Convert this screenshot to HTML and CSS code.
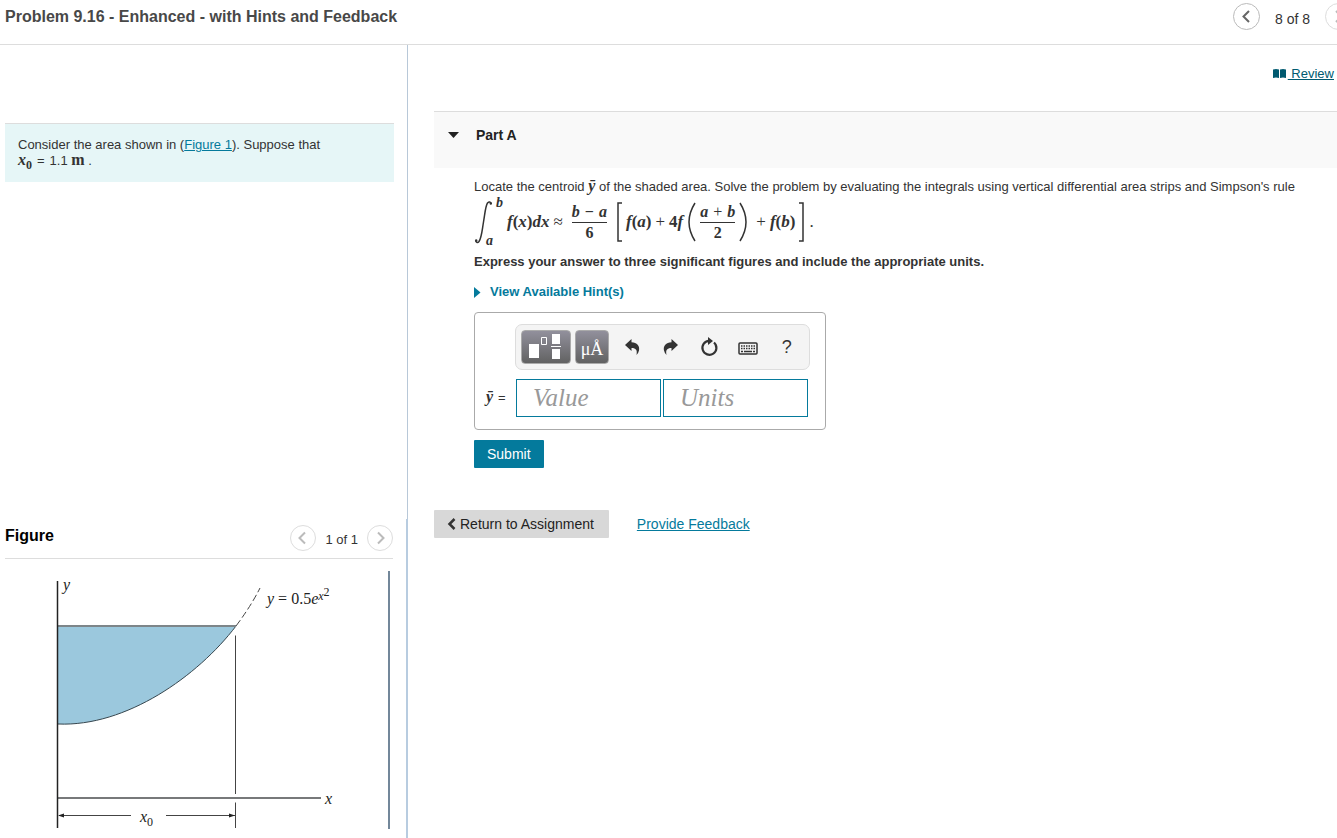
FILE: index.html
```html
<!DOCTYPE html>
<html lang="en">
<head>
<meta charset="utf-8">
<title>Problem 9.16 - Enhanced - with Hints and Feedback</title>
<link rel="stylesheet" href="styles.css">
</head>
<body>
<header class="topbar">
  <h1 class="topbar-title">Problem 9.16 - Enhanced - with Hints and Feedback</h1>
  <nav class="pager" aria-label="Problems">
    <button class="round" type="button" aria-label="Previous problem"><svg width="25" height="25" viewBox="0 0 25 25"><path d="M15 7 9.500 12.500 15 18"/></svg></button>
    <span>8 of 8</span>
    <button class="round round-off" type="button" aria-label="Next problem"><svg width="25" height="25" viewBox="0 0 25 25"><path d="M10 7l5.500 5.500L10 18"/></svg></button>
  </nav>
</header>
<main class="panes">
  <aside class="left">
    <section class="intro">
      <div class="given">Consider the area shown in (<a href="#figure">Figure 1</a>). Suppose that<br><span class="math"><i>x</i><sub>0</sub></span><span class="equals">=</span>1.1 <span class="math">m</span> .</div>
    </section>
    <section class="figure" id="figure">
      <div class="figure-head">
        <h2>Figure</h2>
        <nav class="figure-pager" aria-label="Figures">
          <button class="round round-off" type="button" aria-label="Previous figure"><svg width="24" height="24" viewBox="0 0 24 24"><path d="M14 6.500 8.500 12 14 17.500"/></svg></button>
          <span>1 of 1</span>
          <button class="round round-off" type="button" aria-label="Next figure"><svg width="24" height="24" viewBox="0 0 24 24"><path d="M10 6.500l5.500 5.500L10 17.500"/></svg></button>
        </nav>
      </div>
      <svg class="plot" viewBox="5 559 388 272" role="img" aria-label="Shaded area between the curve and a horizontal line, for x from 0 to x0">
        <path d="M58 626H236C198 676 126 727 58 724Z" fill="#9bc8dd"/>
        <path d="M236 626C198 676 126 727 58 724" fill="none" stroke="#37474f"/>
        <path d="M58 626H236" stroke="#7d8589" stroke-width="2"/>
        <path d="M58 798H321" stroke="#77797a" stroke-width="2"/>
        <path d="M57.500 581V828" stroke="#222" stroke-width="1.500"/>
        <path d="M235.500 635.500V794M235.500 802.500V828" stroke="#444"/>
        <path d="M236 626Q251 606 260 588" stroke="#444" fill="none" stroke-dasharray="7 3"/>
        <path d="M59 815.500H131M166 815.500H235" stroke="#444"/>
        <path d="M58 815.500l6-2v4zM235 815.500l-6-2v4z" fill="#222"/>
        <path d="M389 571V829" stroke="#73879a" stroke-width="2"/>
        <g class="plot-text">
          <text x="63" y="590"><tspan class="it">y</tspan></text>
          <text x="267" y="604"><tspan class="it">y</tspan> = 0.5<tspan class="it">e</tspan><tspan class="it small" dy="-4">x</tspan><tspan class="small" dy="-4">2</tspan></text>
          <text x="325" y="804"><tspan class="it">x</tspan></text>
          <text x="140" y="822"><tspan class="it">x</tspan><tspan class="small" dy="4">0</tspan></text>
        </g>
      </svg>
    </section>
  </aside>
  <section class="right">
    <div class="review"><svg width="13" height="9" viewBox="0 0 13 9"><path d="M0 .5Q3-.3 6 .5V9Q3 8.200 0 9ZM7 .5Q10-.3 13 .5V9Q10 8.200 7 9Z" fill="#005a70"/></svg><a href="#review">&nbsp;Review</a></div>
    <button class="part" type="button" aria-expanded="true"><svg width="12" height="6" viewBox="0 0 12 6"><path d="M0 0H11L5.500 6Z" fill="#222"/></svg>Part A</button>
    <div class="body">
      <p class="prompt">Locate the centroid <i class="math">ȳ</i> of the shaded area. Solve the problem by evaluating the integrals using vertical differential area strips and Simpson's rule</p>
      <div class="formula math">
        <svg width="18" height="44" viewBox="0 0 18 44"><path d="M17.500 4Q16 .5 13.500 3C11.500 6 11 13 9.500 22S7.500 38 5 41.500Q3 44 1.500 40.500" fill="none" stroke="#333" stroke-width="1.500"/><circle cx="16.800" cy="3.500" r="1.200"/><circle cx="2.200" cy="40.500" r="1.200"/></svg>
        <span class="limits"><i>b</i><i class="lower">a</i></span>
        <span><i>f</i>(<i>x</i>)<i>dx</i><span class="op light">≈</span></span>
        <span class="frac ratio"><span><i>b</i><span class="op">−</span><i>a</i></span><span>6</span></span>
        <svg width="6" height="40" viewBox="0 0 6 40"><path d="M6 1H2V39H6" fill="none" stroke="#333" stroke-width="1.500"/></svg>
        <span><i>f</i>(<i>a</i>)<span class="op light">+</span>4<i>f</i></span>
        <svg width="9" height="40" viewBox="0 0 9 40"><path d="M8 1Q-4 20 8 39" fill="none" stroke="#333" stroke-width="1.500"/></svg>
        <span class="frac"><span><i>a</i><span class="op light">+</span><i>b</i></span><span>2</span></span>
        <svg width="9" height="40" viewBox="0 0 9 40"><path d="M1 1Q13 20 1 39" fill="none" stroke="#333" stroke-width="1.500"/></svg>
        <span><span class="op light">+</span><i>f</i>(<i>b</i>)</span>
        <svg width="6" height="40" viewBox="0 0 6 40"><path d="M0 1H4V39H0" fill="none" stroke="#333" stroke-width="1.500"/></svg>
        <span class="stop">.</span>
      </div>
      <p class="express">Express your answer to three significant figures and include the appropriate units.</p>
      <button class="hints" type="button"><svg width="7" height="11" viewBox="0 0 7 11"><path d="M0 0 6.500 5.500 0 11Z" fill="#047a9c"/></svg>View Available Hint(s)</button>
      <form class="answer">
        <div class="tools">
          <button class="tool dark templates" type="button" aria-label="Templates"><svg width="34" height="28" viewBox="0 0 34 28"><path d="M0 13H10V27H0ZM23 3H31V13H23ZM23 18H31V28H23Z" fill="#fff"/><path d="M12.500 6.500H17.500V13.500H12.500ZM22 15.500H32" fill="none" stroke="#fff"/></svg></button>
          <button class="tool dark symbols" type="button" aria-label="Symbols">μÅ</button>
          <button class="tool" type="button" aria-label="Undo"><svg width="15" height="16" viewBox="0 0 15 16"><path d="M0 6 6.500 0V3.200C12 3.200 15 7 14 11.500Q13.500 14 11.500 16C12.500 11 11 9 6.500 9V12Z"/></svg></button>
          <button class="tool" type="button" aria-label="Redo"><svg width="15" height="16" viewBox="0 0 15 16"><path d="M15 6 8.500 0V3.200C3 3.200 0 7 1 11.500Q1.500 14 3.500 16C2.500 11 4 9 8.500 9V12Z"/></svg></button>
          <button class="tool" type="button" aria-label="Reset"><svg width="18" height="20" viewBox="0 0 18 20"><path d="M14 5.500A7 7 0 1 1 9 3.800" fill="none" stroke="#333" stroke-width="2.200"/><path d="M8 0 13 4 8 8Z"/></svg></button>
          <button class="tool" type="button" aria-label="Keyboard shortcuts"><svg class="keys" width="20" height="13" viewBox="0 0 20 13"><rect x="1" y="1" width="18" height="11" rx="1" fill="none" stroke="#333" stroke-width="1.500"/><path d="M3 4H17M3 6.500H17" stroke="#333" stroke-width="1.500" stroke-dasharray="1.500 1"/><path d="M3 9.500H5M6 9.500H14M15 9.500H17" stroke="#333" stroke-width="1.500"/></svg></button>
          <button class="tool help" type="button" aria-label="Help">?</button>
        </div>
        <div class="entry">
          <label for="value"><i class="math">ȳ</i><span class="equals">=</span></label>
          <input id="value" type="text" placeholder="Value">
          <input id="units" type="text" placeholder="Units" aria-label="Units">
        </div>
      </form>
      <button class="submit" type="button">Submit</button>
    </div>
    <div class="links">
      <button class="return" type="button"><svg width="9" height="12" viewBox="0 0 9 12"><path d="M7.500 1 2.500 6l5 5" fill="none" stroke="#333" stroke-width="2.500"/></svg>Return to Assignment</button>
      <a href="#feedback">Provide Feedback</a>
    </div>
  </section>
</main>
</body>
</html>
```
FILE: styles.css
```css
* { box-sizing: border-box; }
body {
  margin: 0;
  min-height: 100vh;
  display: flex;
  flex-direction: column;
  overflow: hidden;
  background: #fff;
  color: #333;
  font: 13px/16px "Liberation Sans", Arial, sans-serif;
}
h1, h2, p { margin: 0; }
button { font: inherit; color: inherit; border: 0; background: none; padding: 0; cursor: pointer; }
a { color: #047a9c; text-decoration: underline; }
svg { display: block; flex: none; }
.math { font-family: "Liberation Serif", "Times New Roman", serif; font-weight: bold; }
.math sub { font-size: 12px; line-height: 0; }
.equals { margin: 0 5px; }
.formula .op { margin: 0 4px; }
.light { font-weight: normal; }

.topbar {
  height: 45px;
  display: flex;
  justify-content: space-between;
  align-items: flex-start;
  padding: 3px 0 0 5px;
  border-bottom: 1px solid #ddd;
}
.topbar-title { font-size: 16px; line-height: 28px; color: #484848; }
.pager, .figure-pager { display: flex; align-items: center; gap: 15px; font-size: 14px; }
.pager { margin-right: -15px; }
.pager span { padding-top: 4px; }
.round { border: 1px solid #bbb; border-radius: 50%; }
.round svg { fill: none; stroke: #666; stroke-width: 2; }
.round-off { border-color: #ddd; }
.round-off svg { stroke: #bbb; }

.panes { flex: 1; display: grid; grid-template-columns: 408px minmax(0, 1fr); }
.left { display: grid; grid-template-rows: 1fr auto; }
.intro { padding: 78px 13px 0 5px; border-right: 1px solid #b8c8d8; }
.given { padding: 13px 13px 12px; border-top: 1px solid #ddd; background: #e6f6f7; min-height: 59px; }
.given .math { font-size: 16px; line-height: 14px; }
.figure { padding: 0 13px 7px 5px; border-right: 2px solid #b8cce0; }
.figure-head { display: flex; justify-content: space-between; height: 40px; padding-top: 6px; border-bottom: 1px solid #ddd; }
.figure-head h2 { color: #000; font-size: 16px; line-height: 22px; }
.figure-pager { gap: 9px; height: 26px; font-size: 13px; }
.figure-pager span { padding-top: 3px; }
.plot { width: 100%; }
.plot-text { font: 16px "Liberation Serif", "Times New Roman", serif; fill: #222; }
.it { font-style: italic; }
.small { font-size: 12px; }

.right { padding-left: 26px; }
.review { display: flex; justify-content: flex-end; align-items: center; gap: 2px; height: 66px; padding: 0 3px 9px 0; }
.review a { color: #005a70; }
.part {
  display: flex;
  align-items: center;
  gap: 16px;
  width: 100%;
  height: 57px;
  padding: 0 14px 10px;
  border-top: 1px solid #ddd;
  background: #f9f9f9;
  color: #222;
  font-size: 14px;
  font-weight: bold;
}
.body { padding: 11px 0 0 40px; }
.prompt { white-space: nowrap; }
.prompt .math, .entry .math { font-size: 16px; line-height: 14px; }
.formula { display: flex; align-items: center; gap: 4px; height: 54px; font-size: 17px; white-space: nowrap; }
.formula svg { fill: #333; }
.limits { display: flex; flex-direction: column; justify-content: space-between; height: 54px; font-size: 14px; }
.limits .lower { margin-left: -10px; }
.frac { display: grid; text-align: center; font-size: 16px; line-height: 20px; }
.formula .frac .op { margin: 0 5px; }
.frac > span:first-child { border-bottom: 1px solid #333; }
.ratio { margin: 0 5px 0 1px; }
.stop { font-weight: normal; }
.express { padding-top: 5px; font-weight: bold; }
.hints { display: flex; align-items: center; gap: 9px; margin-top: 14px; color: #047a9c; font-weight: bold; }
.answer { width: 352px; margin-top: 12px; padding: 11px 11px 12px; border: 1px solid #aaa; border-radius: 4px; }
.tools {
  display: flex;
  align-items: center;
  gap: 4px;
  height: 46px;
  margin: 0 4px 0 29px;
  padding: 0 5px;
  border: 1px solid #ddd;
  border-radius: 7px;
  background: #f4f4f4;
}
.tool { flex: 1; height: 34px; display: flex; align-items: center; justify-content: center; }
.tool svg { fill: #333; }
.dark { flex: none; border: 1px solid #aaa; border-radius: 4px; background: linear-gradient(#92909c, #626262); color: #fff; }
.templates { width: 50px; }
.templates svg { margin-bottom: 4px; }
.symbols { width: 34px; margin-right: 2px; padding-top: 4px; font: 18px "Liberation Serif", "Times New Roman", serif; }
.keys { margin-top: 3px; }
.help { font-size: 18px; }
.entry { display: flex; align-items: center; gap: 2px; margin-top: 9px; }
.entry label { width: 28px; white-space: nowrap; }
.entry input {
  width: 145px;
  height: 38px;
  padding: 0 16px;
  border: 1px solid #047a9c;
  font: italic 25px "Liberation Serif", "Times New Roman", serif;
  color: #333;
}
.entry input::placeholder { color: #999; opacity: 1; }
.submit { height: 28px; margin-top: 10px; padding: 0 13px; border-radius: 1px; background: #047a9c; color: #fff; font-size: 14px; }
.links { display: flex; align-items: center; gap: 28px; margin-top: 42px; font-size: 14px; }
.return { display: flex; align-items: center; gap: 4px; height: 28px; padding: 0 15px 0 13px; border-radius: 1px; background: #d8d8d8; color: #222; }
```
